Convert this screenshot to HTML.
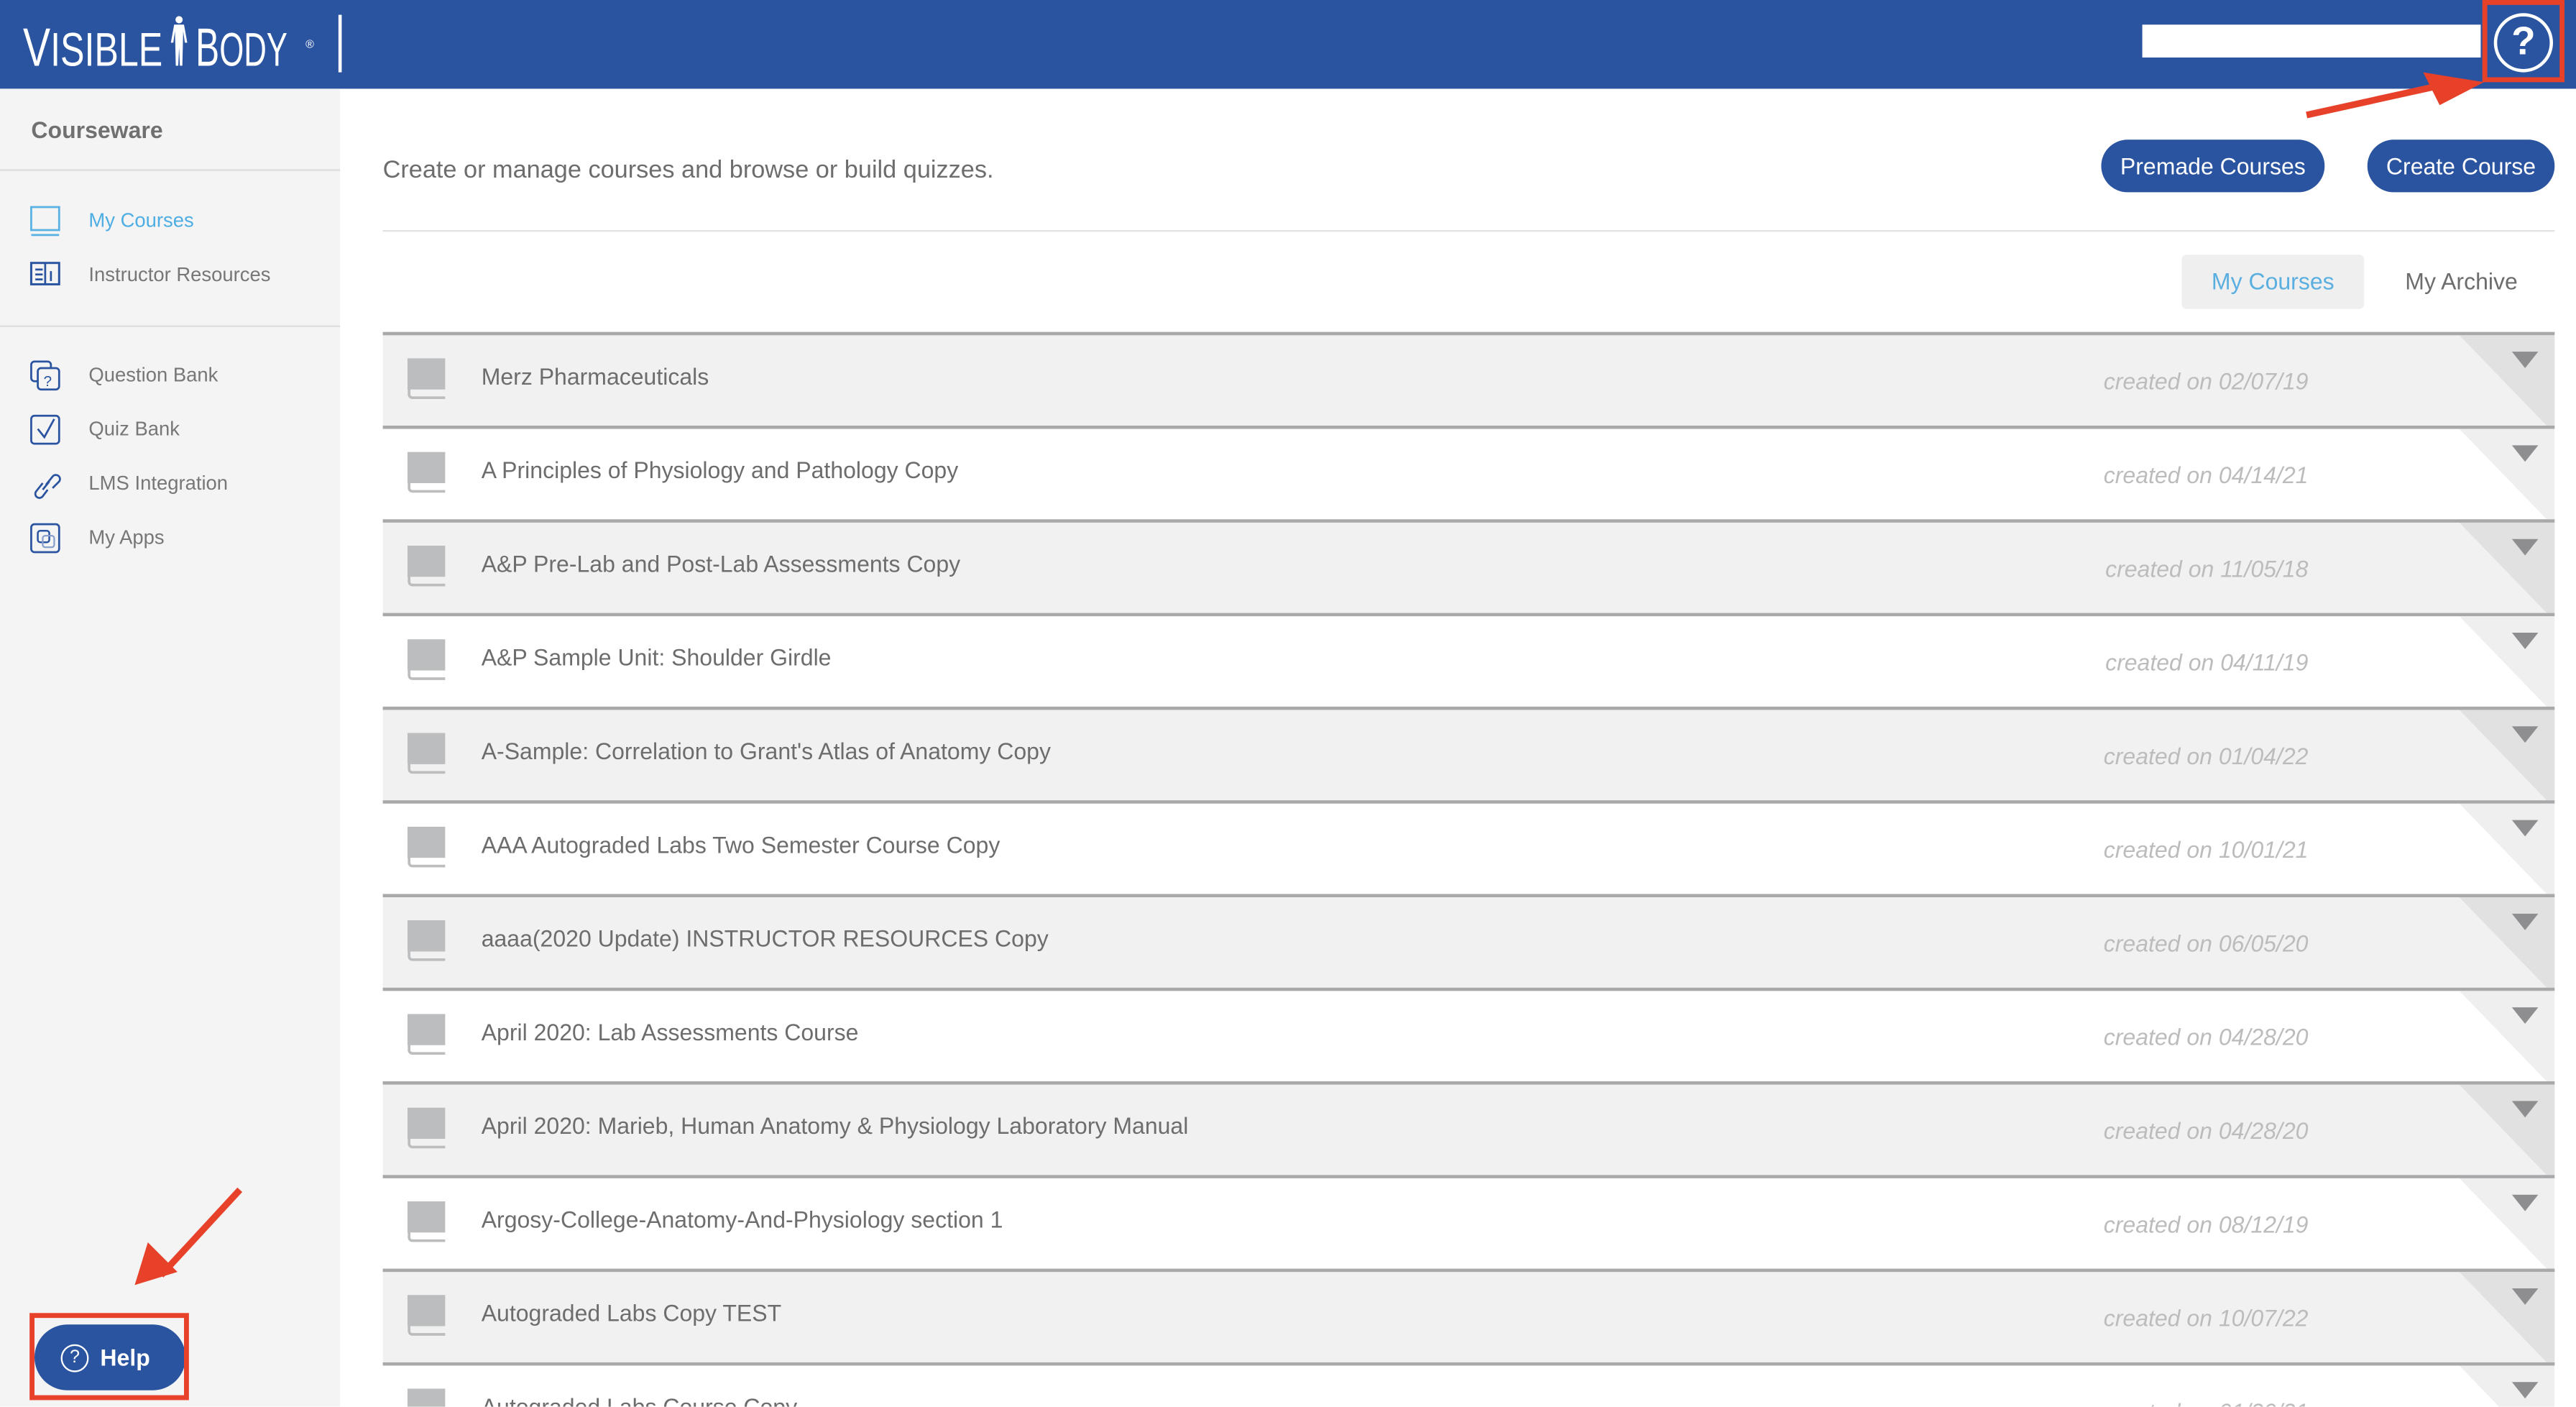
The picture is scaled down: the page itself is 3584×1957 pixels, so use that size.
<!DOCTYPE html>
<html><head><meta charset="utf-8"><style>
*{margin:0;padding:0;box-sizing:border-box}
html,body{width:3584px;height:1956px;overflow:hidden;background:#fff}
#w{position:absolute;left:0;top:0;width:1568px;height:856px;transform:scale(2.285714);transform-origin:0 0;font-family:"Liberation Sans",sans-serif;overflow:hidden}
.hdr{position:absolute;left:0;top:0;width:1568px;height:54px;background:#2a54a0}
.side{position:absolute;left:0;top:54px;width:207px;height:802px;background:#f4f4f4}
.abs{position:absolute}
.nav{position:absolute;left:54px;font-size:12px;color:#777}
.row{position:absolute;left:233px;width:1322px;height:57px;border-top:2px solid #a9a9ab;overflow:hidden}
.row .t{position:absolute;left:60px;top:17px;font-size:14px;color:#6d6d6d}
.row .d{position:absolute;right:150px;top:20px;font-size:14px;color:#bcbcbc;font-style:italic}
.row .tri{position:absolute;right:0;top:0;width:0;height:0;border-top:60px solid transparent;border-right:58px solid #e1e1e1;transform:scaleY(-1)}
.row .ar{position:absolute;right:10px;top:10px;width:0;height:0;border-left:8px solid transparent;border-right:8px solid transparent;border-top:10px solid #8e8e90}
.bk{position:absolute;left:15px;top:14px;width:23px;height:25px}
.btn{position:absolute;top:85px;height:32px;border-radius:16px;background:#2a54a0;color:#fff;font-size:14px;text-align:center;line-height:32px}
</style></head><body><div id="w">
<div class="hdr"></div>
<svg class="abs" style="left:14px;top:8px" width="185" height="36" font-family="Liberation Sans" fill="#fff">
<text x="0" y="32" font-size="33" textLength="85" lengthAdjust="spacingAndGlyphs">V<tspan font-size="29">ISIBLE</tspan></text>
<circle cx="95" cy="4" r="2.2"/>
<path d="M92 7 H98 L100 18 L98.5 18 L97.5 11 L97 32 H95.5 L95 21 L94.5 32 H93 L92.5 11 L91.5 18 L90 18Z"/>
<text x="105" y="32" font-size="33" textLength="56" lengthAdjust="spacingAndGlyphs">B<tspan font-size="29">ODY</tspan></text>
<text x="172" y="21" font-size="7">®</text>
</svg>
<div class="abs" style="left:206px;top:9px;width:2px;height:35px;background:#fff"></div>
<div class="abs" style="left:1304px;top:15px;width:206px;height:20px;background:#fff"></div>
<div class="abs" style="left:1511px;top:0;width:50px;height:50px;border:3px solid #e8412a"></div>
<div class="abs" style="left:1518px;top:8px;width:36px;height:36px;border:2px solid #fff;border-radius:50%;color:#fff;font-weight:bold;font-size:24px;text-align:center;line-height:32px">?</div>
<svg class="abs" style="left:1400px;top:38px" width="112" height="40"><path d="M4 32 L90 13" stroke="#e8412a" stroke-width="4"/><path d="M75 6 L112 12 L85 26Z" fill="#e8412a"/></svg>

<div class="side"></div>
<div class="abs" style="left:19px;top:71px;font-size:14px;font-weight:bold;color:#707070">Courseware</div>
<div class="abs" style="left:0;top:103px;width:207px;height:1px;background:#ddd"></div>
<div class="abs" style="left:0;top:198px;width:207px;height:1px;background:#ddd"></div>
<svg class="abs" style="left:18px;top:125px" width="20" height="20"><rect x="1" y="1" width="17" height="14" fill="none" stroke="#59b0e2" stroke-width="1.2"/><path d="M1 18 H18" stroke="#59b0e2" stroke-width="1.2"/></svg>
<div class="nav" style="top:127px;color:#4eaee3">My Courses</div>
<svg class="abs" style="left:18px;top:158px" width="20" height="18"><rect x="1" y="2" width="17" height="13" fill="none" stroke="#2a54a0" stroke-width="1.3"/><path d="M9.5 2V15M3.5 6H8M3.5 9H8M3.5 12H8M13 7V13" stroke="#2a54a0" stroke-width="1.2"/></svg>
<div class="nav" style="top:160px">Instructor Resources</div>
<svg class="abs" style="left:18px;top:219px" width="20" height="20"><rect x="1" y="1" width="12" height="12" rx="2" fill="none" stroke="#2a54a0" stroke-width="1.2"/><rect x="5" y="5" width="13" height="13" rx="2" fill="#f4f4f4" stroke="#2a54a0" stroke-width="1.2"/><text x="8.5" y="16" font-size="9" fill="#2a54a0" font-family="Liberation Sans">?</text></svg>
<div class="nav" style="top:221px">Question Bank</div>
<svg class="abs" style="left:18px;top:252px" width="20" height="20"><rect x="1" y="1" width="17" height="17" rx="2" fill="none" stroke="#2a54a0" stroke-width="1.2"/><path d="M5 9 L9 14 L15 3" fill="none" stroke="#2a54a0" stroke-width="1.2"/></svg>
<div class="nav" style="top:254px">Quiz Bank</div>
<svg class="abs" style="left:18px;top:285px" width="20" height="20"><path d="M8 9 L4 14 a2.5 2.5 0 0 0 4 3 L11 13 M10 10 L14 5 a2.5 2.5 0 0 1 4 3 L14 12 M8 13 L12 8" fill="none" stroke="#2a54a0" stroke-width="1.2"/></svg>
<div class="nav" style="top:287px">LMS Integration</div>
<svg class="abs" style="left:18px;top:318px" width="20" height="20"><rect x="1" y="1" width="17" height="17" rx="2" fill="none" stroke="#2a54a0" stroke-width="1.2"/><rect x="5" y="5" width="7" height="7" rx="1.5" fill="none" stroke="#2a54a0" stroke-width="1.1"/><rect x="8" y="8" width="7" height="7" rx="1.5" fill="none" stroke="#8aa0cc" stroke-width="1"/></svg>
<div class="nav" style="top:320px">My Apps</div>

<svg class="abs" style="left:78px;top:720px" width="72" height="66"><path d="M68 4 L20 56" stroke="#e8412a" stroke-width="4"/><path d="M4 62 L12 36 L30 54Z" fill="#e8412a"/></svg>
<div class="abs" style="left:21px;top:806px;width:92px;height:40px;border-radius:20px;background:#2a54a0"></div>
<div class="abs" style="left:18px;top:799px;width:97px;height:53px;border:3px solid #e8412a"></div>
<div class="abs" style="left:37px;top:818px;width:17px;height:17px;border:1.5px solid #fff;border-radius:50%;color:#fff;font-size:11px;text-align:center;line-height:14px">?</div>
<div class="abs" style="left:61px;top:818px;color:#fff;font-weight:bold;font-size:14px">Help</div>

<div class="abs" style="left:233px;top:95px;font-size:15px;color:#6d6d6d">Create or manage courses and browse or build quizzes.</div>
<div class="btn" style="left:1279px;width:136px">Premade Courses</div>
<div class="btn" style="left:1441px;width:114px">Create Course</div>
<div class="abs" style="left:233px;top:140px;width:1322px;height:1px;background:#e2e2e2"></div>
<div class="abs" style="left:1328px;top:155px;width:111px;height:33px;border-radius:3px;background:#efefef;color:#5aafe0;font-size:14px;text-align:center;line-height:33px">My Courses</div>
<div class="abs" style="left:1464px;top:163px;font-size:14px;color:#6d6d6d">My Archive</div>

<div id="rows"></div>
<script>
var r=[["Merz Pharmaceuticals","02/07/19"],["A Principles of Physiology and Pathology Copy","04/14/21"],["A&amp;P Pre-Lab and Post-Lab Assessments Copy","11/05/18"],["A&amp;P Sample Unit: Shoulder Girdle","04/11/19"],["A-Sample: Correlation to Grant's Atlas of Anatomy Copy","01/04/22"],["AAA Autograded Labs Two Semester Course Copy","10/01/21"],["aaaa(2020 Update) INSTRUCTOR RESOURCES Copy","06/05/20"],["April 2020: Lab Assessments Course","04/28/20"],["April 2020: Marieb, Human Anatomy &amp; Physiology Laboratory Manual","04/28/20"],["Argosy-College-Anatomy-And-Physiology section 1","08/12/19"],["Autograded Labs Copy TEST","10/07/22"],["Autograded Labs Course Copy","01/20/21"]];
var h="";for(var i=0;i<r.length;i++){var y=202+57*i;var bg=i%2==0?"#f1f1f1":"#fff";var tc=i%2==0?"#e1e1e1":"#efefef";
h+='<div class="row" style="top:'+y+'px;background:'+bg+'"><div class="tri" style="border-right-color:'+tc+'"></div><div class="ar"></div><svg class="bk" viewBox="0 0 23 25"><rect x="0" y="0" width="23" height="19" fill="#bcbdbe"/><path d="M1 18 V22 a2 2 0 0 0 2 2 H23" fill="none" stroke="#bcbdbe" stroke-width="1.6"/></svg><div class="t">'+r[i][0]+'</div><div class="d">created on '+r[i][1]+'</div></div>';}
document.getElementById("rows").innerHTML=h;
</script>
</div></body></html>
